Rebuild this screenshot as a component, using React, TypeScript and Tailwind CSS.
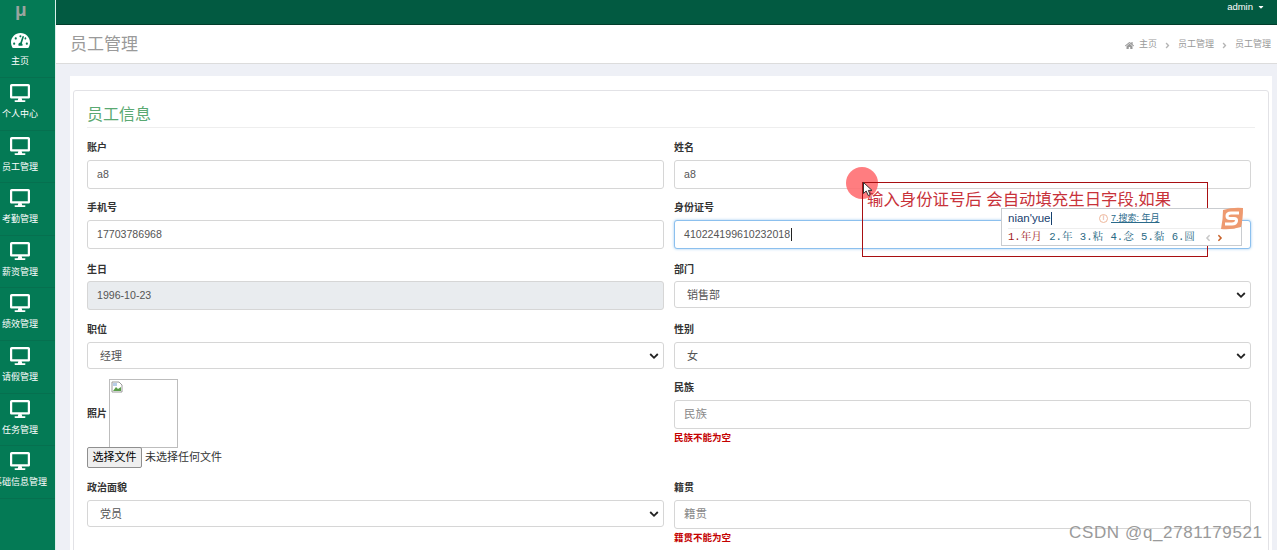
import React from "react";
import { FaDesktop, FaTachometerAlt, FaHome, FaCaretDown, FaAngleRight, FaAngleLeft } from "react-icons/fa";

const cjk = "font-['Liberation_Sans','Noto_Sans_CJK_SC',sans-serif]";
const nav = ["个人中心", "员工管理", "考勤管理", "薪资管理", "绩效管理", "请假管理", "任务管理", "基础信息管理"];

function Label({ children, h = "h-[19px]" }: { children: React.ReactNode; h?: string }) {
  return <div className={`${h} text-[10px] leading-[14px] font-bold text-[#333]`}>{children}</div>;
}

function Input({ value, placeholder, disabled, focus, size = "text-[10.6px]" }: { value?: string; placeholder?: string; disabled?: boolean; focus?: boolean; size?: string }) {
  return (
    <div
      className={`flex h-[29px] items-center rounded-[3px] border px-[9px] ${size} ${
        focus ? "border-[#8cc0ee] shadow-[0_0_3px_#9ecaf0]" : "border-[#d6d6d6]"
      } ${disabled ? "bg-[#e9ecef]" : "bg-white"} ${placeholder ? "text-[#8a8a8a]" : "text-[#555]"}`}
    >
      {value ?? placeholder}
      {focus && <span className="ml-[1px] h-[13px] w-[1px] bg-[#222]" />}
    </div>
  );
}

function Select({ value }: { value: string }) {
  return (
    <div className="flex h-[27px] items-center justify-between rounded-[3px] border border-[#d6d6d6] bg-white pr-[4px] pl-[12px] text-[11px] text-[#555]">
      <span className="pt-[1px]">{value}</span>
      <svg width="10" height="8" viewBox="0 0 10 8">
        <path d="M1.2 2 L5 5.8 L8.8 2" fill="none" stroke="#222" strokeWidth="1.8" />
      </svg>
    </div>
  );
}

function Field({ label, children, className = "", labelH }: { label: string; children: React.ReactNode; className?: string; labelH?: string }) {
  return (
    <div className={className}>
      <Label h={labelH}>{label}</Label>
      {children}
    </div>
  );
}

function ErrorText({ children }: { children: React.ReactNode }) {
  return <div className="mt-[3px] text-[9.5px] leading-[12px] font-bold text-[#c40000]">{children}</div>;
}

export default function App() {
  return (
    <div className={`relative flex h-[550px] w-[1277px] overflow-hidden bg-[#eef0f6] ${cjk}`}>
      <aside className="w-[56px] shrink-0 border-r border-[#d8f0ea] bg-[#047a55] text-white">
        <div className="h-[25px] pl-[15px] text-[19px] leading-[19px] font-bold text-[#9aa59f]">μ</div>
        <div className="flex h-[53px] flex-col items-center border-b border-[#06704f] pt-[6px] pr-[15px]">
          <FaTachometerAlt className="h-[19px] w-[19px] shrink-0" />
          <span className="mt-[5px] text-[9px] leading-[12px]">主页</span>
        </div>
        {nav.map((n) => (
          <div key={n} className="flex h-[52.6px] flex-col items-center border-b border-[#06704f] pt-[5px] pr-[15px]">
            <FaDesktop className="h-[20px] w-[20px] shrink-0" />
            <span className="mt-[5px] text-[9px] leading-[12px] whitespace-nowrap">{n}</span>
          </div>
        ))}
      </aside>
      <div className="flex min-w-0 flex-1 flex-col">
        <header className="flex h-[25px] shrink-0 justify-end border-b border-[#013d2b] bg-[#025a41] pt-[1px] pr-[12px] text-[9.5px] text-white">
          <span className="flex h-[12px] items-center gap-[4px] leading-[12px]">
            admin <FaCaretDown className="h-[8px] w-[8px]" />
          </span>
        </header>
        <div className="flex h-[39px] shrink-0 items-center justify-between border-b border-[#dcdcdc] bg-white pr-[6px] pl-[14px]">
          <h1 className="pt-[2px] text-[17px] font-normal text-[#9a9a9a]">员工管理</h1>
          <div className="flex items-center gap-[5px] pt-[2px] text-[9px] text-[#999]">
            <FaHome className="h-[9px] w-[9px]" />
            <span>主页</span>
            <FaAngleRight className="mx-[1px] h-[9px] w-[9px] text-[#b5b5b5]" />
            <span>员工管理</span>
            <FaAngleRight className="mx-[1px] h-[9px] w-[9px] text-[#b5b5b5]" />
            <span>员工管理</span>
          </div>
        </div>
        <main className="mt-[12px] mr-[5px] ml-[14px] flex-1 overflow-hidden bg-white px-[3px] pt-[14px]">
          <section className="h-[500px] rounded-t-[3px] border border-[#e2e2e6] px-[13px] pt-[12px]">
            <h2 className="h-[25px] border-b border-[#eeeeee] text-[16px] leading-[23px] font-normal text-[#5aa972]">员工信息</h2>
            <div className="mt-[13px] grid grid-cols-[577px_577px] gap-x-[10px]">
              <Field label="账户" className="h-[60px]"><Input value="a8" /></Field>
              <Field label="姓名" className="h-[60px]"><Input value="a8" /></Field>
              <Field label="手机号" className="h-[62px]"><Input value="17703786968" /></Field>
              <Field label="身份证号" className="h-[62px]"><Input value="410224199610232018" focus /></Field>
              <Field label="生日" className="h-[60px]" labelH="h-[18px]"><Input value="1996-10-23" disabled /></Field>
              <Field label="部门" className="h-[60px]" labelH="h-[18px]"><Select value="销售部" /></Field>
              <Field label="职位" className="h-[50px]"><Select value="经理" /></Field>
              <Field label="性别" className="h-[50px]"><Select value="女" /></Field>
              <div className="h-[108px] pt-[6px]">
                <div className="flex items-center">
                  <span className="w-[22px] text-[10px] font-bold text-[#333]">照片</span>
                  <div className="h-[69px] w-[69px] border border-[#bdbdbd] bg-white p-[1px]">
                    <svg width="12" height="12" viewBox="0 0 12 12">
                      <path d="M1 1h7l3 3v7H1z" fill="#fff" stroke="#9a9a9a" />
                      <path d="M2 10l3-4 2 2 3-2v4z" fill="#5b9e4a" />
                      <path d="M2 2h4v3H2z" fill="#b8cde8" />
                    </svg>
                  </div>
                </div>
                <div className="-mt-[1px] flex items-center">
                  <span className="flex h-[21px] w-[55px] items-center justify-center rounded-[2px] border border-[#8f8f8f] bg-[#efefef] text-[11px] text-black">选择文件</span>
                  <span className="ml-[3px] text-[11px] text-[#333]">未选择任何文件</span>
                </div>
              </div>
              <div className="h-[108px] pt-[8px]">
                <Label>民族</Label>
                <Input placeholder="民族" size="text-[11.5px]" />
                <ErrorText>民族不能为空</ErrorText>
              </div>
              <Field label="政治面貌"><Select value="党员" /></Field>
              <div>
                <Label>籍贯</Label>
                <Input placeholder="籍贯" size="text-[11.5px]" />
                <ErrorText>籍贯不能为空</ErrorText>
              </div>
            </div>
          </section>
        </main>
      </div>

      {/* recording overlays */}
      <div className="absolute top-[167px] left-[846px] h-[32px] w-[32px] rounded-full bg-[#ff6f72]/90" />
      <div className="absolute top-[182px] left-[862px] h-[75px] w-[346px] border border-[#a80f12] text-[16.4px] leading-[20px] whitespace-nowrap text-[#c8323a]">
        <span className="absolute top-[6px] left-[4px]">输入身份证号后 会自动填充生日字段,如果</span>
      </div>
      <svg className="absolute top-[182px] left-[863px]" width="11" height="15" viewBox="0 0 11 15">
        <path d="M0.5 0.5 V11.5 L3.2 9 L5.2 13.5 L7.2 12.6 L5.3 8.4 H9 Z" fill="#fff" stroke="#333" strokeWidth="1" />
      </svg>
      <div className="absolute top-[208px] left-[1001px] h-[38px] w-[241px] border border-[#c9ccd0] bg-white">
        <div className="mx-[6px] flex h-[20px] items-center border-b border-[#eeeeee]">
          <span className="flex w-[91px] items-center text-[11.5px] text-[#17406e]">nian'yue<span className="ml-[1px] h-[13px] w-[1px] bg-[#17406e]" /></span>
          <span className="flex items-center gap-[3px] text-[9px] text-[#2a6a8a]">
            <span className="flex h-[9px] w-[9px] items-center justify-center rounded-full border border-[#eeb89c] text-[7px] text-[#e0a080]">i</span>
            <span className="underline">7.搜索: 年月</span>
          </span>
        </div>
        <div className="flex h-[17px] items-center gap-[7.3px] pl-[6px] font-['Liberation_Mono','Noto_Serif_CJK_SC','Noto_Sans_CJK_SC',serif] text-[10.6px] text-[#2a6a85]">
          <span className="text-[#a01818]">1.年月</span>
          <span>2.年</span>
          <span>3.粘</span>
          <span>4.念</span>
          <span>5.黏</span>
          <span>6.圆</span>
          <span className="ml-[1px] flex items-center">
            <FaAngleLeft className="h-[10px] w-[10px] text-[#c8c8c8]" />
            <FaAngleRight className="ml-[2px] h-[10px] w-[10px] text-[#c8622a]" />
          </span>
        </div>
      </div>
      <svg className="absolute top-[207px] left-[1221px]" width="23" height="24" viewBox="0 0 23 24">
        <path d="M2 3 Q12 0 22 1 Q22 12 20 20 Q10 23 0 22 Q2 12 2 3 Z" fill="#ee9a70" />
        <path d="M18 6 H10 Q6 6 6 9 Q6 11.5 9 11.5 H13 Q16 11.5 15.5 14 Q15 17 11 17 H4" fill="none" stroke="#fff" strokeWidth="3" />
      </svg>
      <div className="absolute top-[524px] left-[1069px] font-['Liberation_Sans',sans-serif] text-[17px] leading-[18px] tracking-[0.63px] text-[#9a9a9a]">CSDN @q_2781179521</div>
    </div>
  );
}
